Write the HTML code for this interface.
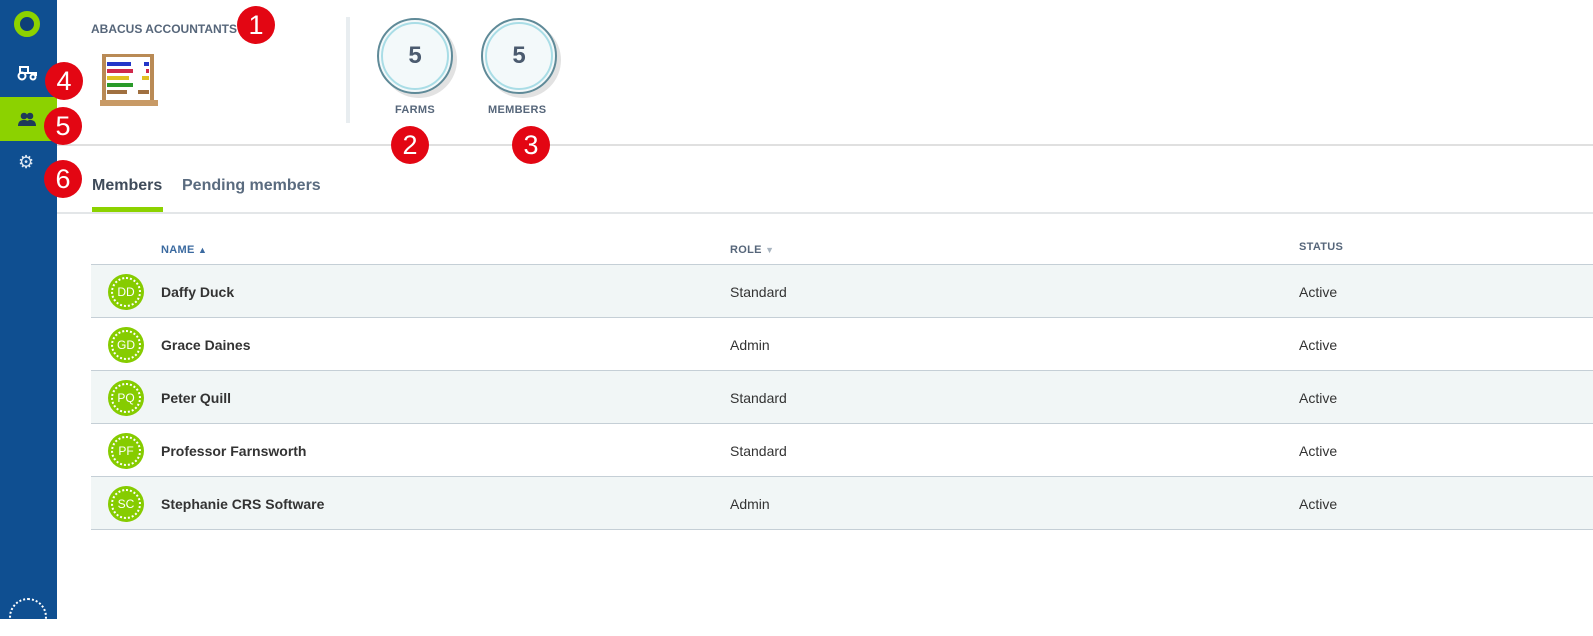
<!DOCTYPE html>
<html><head><meta charset="utf-8"><style>
*{margin:0;padding:0;box-sizing:border-box}
body{width:1593px;height:619px;overflow:hidden;background:#fff;font-family:"Liberation Sans",sans-serif;position:relative}
.side{position:absolute;left:0;top:0;width:57px;height:619px;background:#0f4f91}
.abs{position:absolute}
.badge{position:absolute;width:38px;height:38px;border-radius:50%;background:#e30613;color:#fff;font-size:27px;text-align:center;line-height:38px}
.circ{position:absolute;width:76px;height:76px;border-radius:50%;border:2px solid #5f8a98;background:#f3f9fa;box-shadow:4px 4px 0 #e2e2e2}
.circ div{position:absolute;left:2px;top:2px;right:2px;bottom:2px;border-radius:50%;border:2px solid #a9dde6;text-align:center;line-height:64px;font-size:24px;font-weight:bold;color:#4b5b6f}
.lbl{position:absolute;font-size:11px;font-weight:bold;color:#56667a;letter-spacing:.3px}
.row{position:absolute;left:91px;width:1502px;height:53px;border-bottom:1px solid #c5cfd6;font-size:14px;color:#333}
.row.s{background:#f1f6f6}
.row span{position:absolute;top:19px}
.av{position:absolute;left:17px;top:9px;width:36px;height:36px;border-radius:50%;background:#86cc00}
.av div{position:absolute;inset:3px;border-radius:50%;border:2px dotted #fff;color:#fff;font-size:12px;text-align:center;line-height:26px}
</style></head><body>
<div class="side">
 <div class="abs" style="left:14px;top:11px;width:26px;height:26px;border-radius:50%;border:6px solid #8cd200;background:#0d3f78"></div>
 <svg class="abs" style="left:17px;top:65px" width="22" height="16" viewBox="0 0 22 16"><g fill="none" stroke="#fff" stroke-width="2"><rect x="3" y="2" width="8" height="6"/><circle cx="5" cy="11" r="3.5"/><circle cx="16" cy="12" r="2.5"/><path d="M11 8h8v3"/></g></svg>
 <div class="abs" style="left:0;top:97px;width:57px;height:44px;background:#8cd200"></div>
 <svg class="abs" style="left:18px;top:112px" width="18" height="14" viewBox="0 0 18 14"><g fill="#1e3a5a"><circle cx="6" cy="4" r="3.3"/><circle cx="12" cy="4" r="3.3"/><path d="M0 14c0-5 3-6 6-6s6 1 6 6z"/><path d="M8 14c0-5 2-6 4-6 3 0 6 1 6 6z"/></g></svg>
 <div class="abs" style="left:18px;top:153px;color:#dfe8f2;font-size:18px;line-height:18px">⚙</div>
 <div class="abs" style="left:9px;top:598px;width:38px;height:38px;border-radius:50%;border:2px dotted #fff"></div>
</div>
<div class="abs" style="left:91px;top:22px;font-size:12px;font-weight:bold;color:#56667a">ABACUS ACCOUNTANTS</div>
<svg class="abs" style="left:98px;top:48px" width="62" height="62" viewBox="0 0 62 62"><g><rect x="4" y="6" width="4" height="50" fill="#b98a55"/><rect x="52" y="6" width="4" height="46" fill="#b98a55"/><rect x="4" y="6" width="52" height="3" fill="#b98a55"/><rect x="2" y="52" width="58" height="6" fill="#c89a66"/>
<rect x="9" y="14" width="24" height="4" fill="#2336c8"/><rect x="9" y="21" width="26" height="4" fill="#d0284a"/><rect x="9" y="28" width="22" height="4" fill="#e0c020"/><rect x="9" y="35" width="26" height="4" fill="#2a9a2a"/><rect x="9" y="42" width="20" height="4" fill="#a07040"/>
<rect x="46" y="14" width="5" height="4" fill="#2336c8"/><rect x="48" y="21" width="3" height="4" fill="#d0284a"/><rect x="44" y="28" width="7" height="4" fill="#e0c020"/><rect x="40" y="42" width="11" height="4" fill="#a07040"/></g></svg>
<div class="abs" style="left:346px;top:17px;width:4px;height:106px;background:#e8edf0"></div>
<div class="circ" style="left:377px;top:18px"><div>5</div></div>
<div class="circ" style="left:481px;top:18px"><div>5</div></div>
<div class="lbl" style="left:395px;top:104px">FARMS</div>
<div class="lbl" style="left:488px;top:104px">MEMBERS</div>
<div class="abs" style="left:57px;top:144px;width:1536px;height:2px;background:#e0e0e0"></div>
<div class="abs" style="left:92px;top:177px;font-size:16px;font-weight:bold;color:#3f4b5a">Members</div>
<div class="abs" style="left:182px;top:177px;font-size:16px;font-weight:bold;color:#5a6b7f">Pending members</div>
<div class="abs" style="left:92px;top:207px;width:71px;height:5px;background:#8cd200"></div>
<div class="abs" style="left:57px;top:212px;width:1536px;height:2px;background:#e3e6e8"></div>
<div class="lbl" style="left:161px;top:244px;color:#3b6aa0">NAME <span style="font-size:9px">▲</span></div>
<div class="lbl" style="left:730px;top:244px">ROLE <span style="font-size:9px;color:#a8b4c0">▼</span></div>
<div class="lbl" style="left:1299px;top:241px">STATUS</div>
<div class="abs" style="left:91px;top:264px;width:1502px;height:1px;background:#c5cfd6"></div>
<div class="row s" style="top:265px"><div class="av"><div>DD</div></div><span style="left:70px;font-weight:bold">Daffy Duck</span><span style="left:639px">Standard</span><span style="left:1208px">Active</span></div>
<div class="row" style="top:318px"><div class="av"><div>GD</div></div><span style="left:70px;font-weight:bold">Grace Daines</span><span style="left:639px">Admin</span><span style="left:1208px">Active</span></div>
<div class="row s" style="top:371px"><div class="av"><div>PQ</div></div><span style="left:70px;font-weight:bold">Peter Quill</span><span style="left:639px">Standard</span><span style="left:1208px">Active</span></div>
<div class="row" style="top:424px"><div class="av"><div>PF</div></div><span style="left:70px;font-weight:bold">Professor Farnsworth</span><span style="left:639px">Standard</span><span style="left:1208px">Active</span></div>
<div class="row s" style="top:477px"><div class="av"><div>SC</div></div><span style="left:70px;font-weight:bold">Stephanie CRS Software</span><span style="left:639px">Admin</span><span style="left:1208px">Active</span></div>
<div class="badge" style="left:237px;top:6px">1</div>
<div class="badge" style="left:391px;top:126px">2</div>
<div class="badge" style="left:512px;top:126px">3</div>
<div class="badge" style="left:45px;top:62px">4</div>
<div class="badge" style="left:44px;top:107px">5</div>
<div class="badge" style="left:44px;top:160px">6</div>
</body></html>
